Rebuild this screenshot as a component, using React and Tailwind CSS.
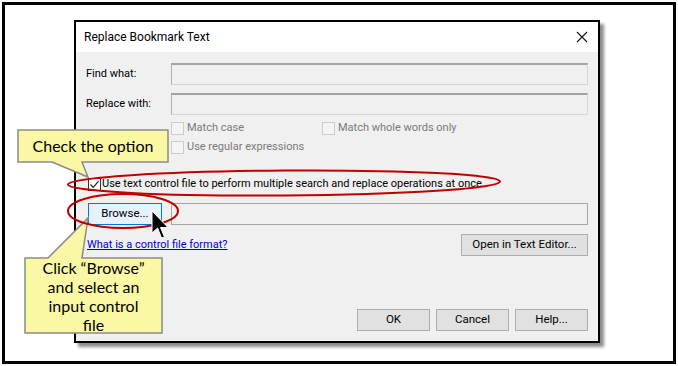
import React from 'react';

const ui = { fontFamily: 'Roboto, "Segoe UI", sans-serif' };
const note = { fontFamily: 'Lato, "Open Sans", sans-serif' };

const Checkbox = ({ checked, disabled }) => (
  <span
    className={`flex h-[13px] w-[13px] shrink-0 items-center justify-center border ${
      disabled ? 'border-[#cccccc] bg-[#f4f4f4]' : 'border-[#333333] bg-white'
    }`}
  >
    {checked && (
      <svg width="11" height="11" viewBox="0 0 11 11">
        <path d="M1.5 5.5 L4.3 8.3 L9.5 2.2" fill="none" stroke="#222" strokeWidth="1.2" />
      </svg>
    )}
  </span>
);

const DisabledInput = () => (
  <div className="h-[22px] w-[417px] border border-[#d6d6d6] border-t-2 border-t-[#a3a3a3] border-l-[#b0b0b0] bg-[#f0f0f0]" />
);

const Button = ({ children, className = '' }) => (
  <button
    className={`flex h-[22px] items-center justify-center border border-[#adadad] bg-[#e1e1e1] text-[11.5px] text-black ${className}`}
  >
    {children}
  </button>
);

const Dialog = () => (
  <div className="flex h-[323px] w-[526px] flex-col border-2 border-black bg-[#f0f0f0] shadow-[4px_4px_3px_rgba(0,0,0,0.45)]" style={ui}>
    <div className="flex h-[30px] shrink-0 items-center justify-between bg-white pl-[8px] pr-[10px] text-[12px] text-black">
      <span>Replace Bookmark Text</span>
      <svg width="12" height="12" viewBox="0 0 12 12">
        <path d="M1 1 L11 11 M11 1 L1 11" stroke="#111" strokeWidth="1.1" />
      </svg>
    </div>

    <div className="flex flex-1 flex-col whitespace-nowrap pl-[10px] pr-[10px] text-[11px] text-black">
      <div className="mt-[11px] flex items-center">
        <span className="w-[85px]">Find what:</span>
        <DisabledInput />
      </div>
      <div className="mt-[8px] flex items-center">
        <span className="w-[85px]">Replace with:</span>
        <DisabledInput />
      </div>

      <div className="mt-[7px] flex pl-[85px] text-[#7a7a7a]">
        <div className="flex w-[151px] flex-col gap-[6px]">
          <label className="flex h-[13px] items-center gap-[3px]">
            <Checkbox disabled />
            <span>Match case</span>
          </label>
          <label className="flex h-[13px] items-center gap-[3px]">
            <Checkbox disabled />
            <span>Use regular expressions</span>
          </label>
        </div>
        <label className="flex h-[13px] items-center gap-[3px]">
          <Checkbox disabled />
          <span>Match whole words only</span>
        </label>
      </div>

      <label className="mt-[24px] flex h-[13px] items-center gap-[1px] pl-[2px]">
        <Checkbox checked />
        <span>Use text control file to perform multiple search and replace operations at once</span>
      </label>

      <div className="mt-[12px] flex items-center">
        <button className="ml-[2px] flex h-[22px] w-[74px] items-center justify-center border border-[#0078d7] bg-[#e5f1fb] text-[11.5px] text-black">
          Browse...
        </button>
        <div className="ml-[9px] h-[22px] w-[417px] border border-[#a6a6a6] bg-[#f0f0f0]" />
      </div>

      <div className="mt-[9px] flex items-center justify-between">
        <a className="ml-[1px] text-[#0000cc] underline">What is a control file format?</a>
        <Button className="w-[127px]">Open in Text Editor...</Button>
      </div>

      <div className="mb-[10px] mt-auto flex justify-end gap-[6px]">
        <Button className="w-[73px]">OK</Button>
        <Button className="w-[73px]">Cancel</Button>
        <Button className="w-[73px]">Help...</Button>
      </div>
    </div>
  </div>
);

export default function App() {
  return (
    <div className="relative h-[366px] w-[678px] overflow-hidden bg-white">
      <div className="m-[2px] h-[362px] w-[674px] border-[3px] border-black bg-white pl-[69px] pt-[15px]">
        <Dialog />
      </div>

      <svg className="pointer-events-none absolute left-0 top-0" width="678" height="366" viewBox="0 0 678 366">
        <path
          d="M18 130 H168 V162 H82 L88 177 L52 162 H18 Z"
          fill="#faf8a4"
          stroke="#8a8a8a"
          strokeWidth="1.5"
        />
        <path
          d="M25 258 H48 L88 218 L82 258 H162 V333 H25 Z"
          fill="#faf8a4"
          stroke="#8a8a8a"
          strokeWidth="1.5"
        />
        <ellipse cx="284" cy="183" rx="216" ry="12.5" fill="none" stroke="#c00000" strokeWidth="2" transform="rotate(-0.4 284 183)" />
        <ellipse cx="123" cy="211" rx="55" ry="17" fill="none" stroke="#c00000" strokeWidth="2" />
        <path
          d="M152 211 L152 233 L157.6 228 L161.5 238 L164.5 237 L160.5 227.5 L168 227.5 Z"
          fill="#000"
          stroke="#fff"
          strokeWidth="1"
          strokeLinejoin="round"
        />
      </svg>

      <div className="absolute left-[18px] top-[130px] flex h-[32px] w-[150px] items-center justify-center text-[16px] text-black" style={note}>
        Check the option
      </div>
      <div className="absolute left-[25px] top-[258px] flex h-[75px] w-[137px] items-center justify-center text-center text-[16px] leading-[19px] text-black" style={note}>
        <span>
          Click “Browse”
          <br />
          and select an
          <br />
          input control
          <br />
          file
        </span>
      </div>
    </div>
  );
}
